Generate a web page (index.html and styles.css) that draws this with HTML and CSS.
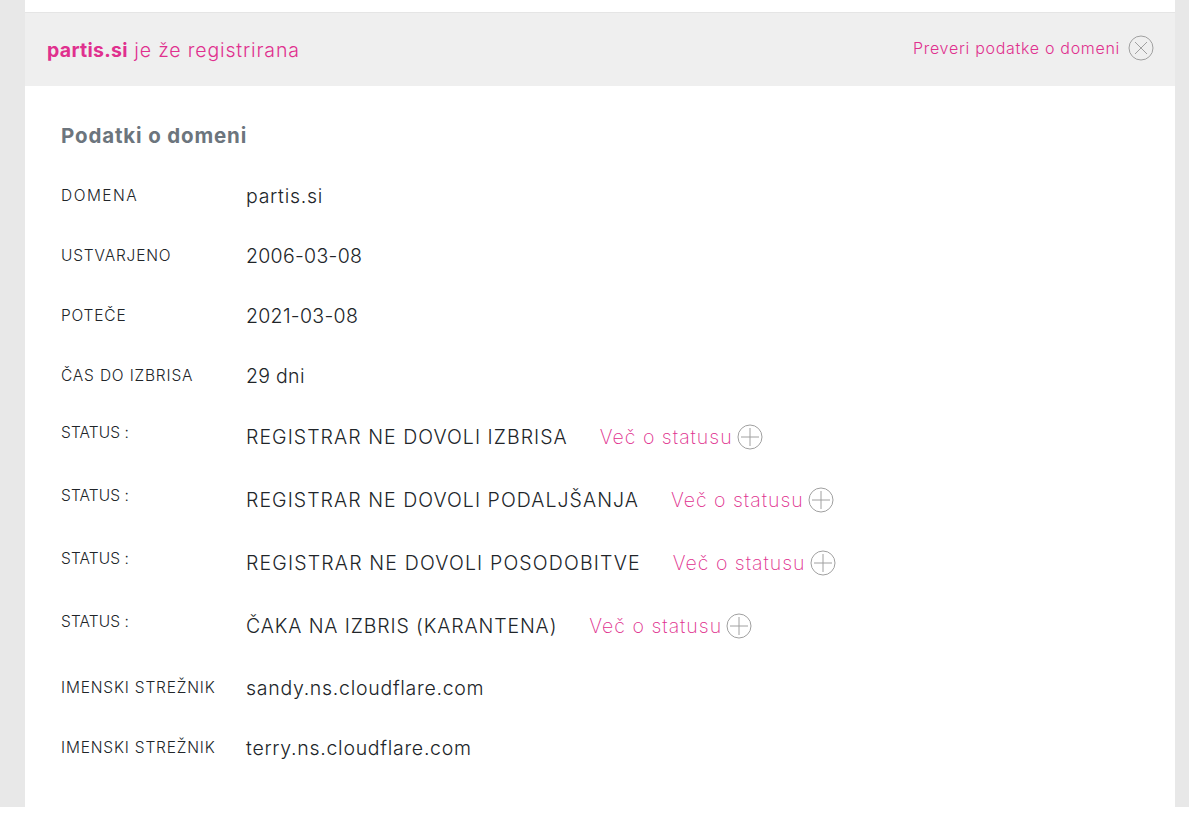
FILE: index.html
```html
<!DOCTYPE html>
<html lang="sl">
<head>
<meta charset="utf-8">
<title>partis.si</title>
<link rel="stylesheet" href="styles.css">
</head>
<body>
<div class="frame">
  <main class="card">
    <header class="banner">
      <h1 class="banner-title"><strong>partis.si</strong> je že registrirana</h1>
      <a class="banner-link">Preveri podatke o domeni
        <svg class="icon" viewBox="0 0 26 26"><circle cx="13" cy="13" r="12" /><path d="M7 7 19 19M19 7 7 19" /></svg>
      </a>
    </header>
    <section class="details">
      <h2 class="details-title">Podatki o domeni</h2>
      <div class="row"><span class="label label-wide">DOMENA</span><span class="value">partis.si</span></div>
      <div class="row"><span class="label">USTVARJENO</span><span class="value value-num">2006-03-08</span></div>
      <div class="row"><span class="label">POTEČE</span><span class="value value-num">2021-03-08</span></div>
      <div class="row"><span class="label">ČAS DO IZBRISA</span><span class="value value-num">29 dni</span></div>
      <div class="row row-status"><span class="label label-status">STATUS :</span><span class="value value-caps">REGISTRAR NE DOVOLI IZBRISA</span><a class="more">Več o statusu<svg class="icon" viewBox="0 0 26 26"><circle cx="13" cy="13" r="12" /><path d="M13 4V22M4 13H22" /></svg></a></div>
      <div class="row row-status"><span class="label label-status">STATUS :</span><span class="value value-caps">REGISTRAR NE DOVOLI PODALJŠANJA</span><a class="more">Več o statusu<svg class="icon" viewBox="0 0 26 26"><circle cx="13" cy="13" r="12" /><path d="M13 4V22M4 13H22" /></svg></a></div>
      <div class="row row-status"><span class="label label-status">STATUS :</span><span class="value value-caps value-caps-wide">REGISTRAR NE DOVOLI POSODOBITVE</span><a class="more">Več o statusu<svg class="icon" viewBox="0 0 26 26"><circle cx="13" cy="13" r="12" /><path d="M13 4V22M4 13H22" /></svg></a></div>
      <div class="row row-status"><span class="label label-status">STATUS :</span><span class="value value-caps value-caps-narrow">ČAKA NA IZBRIS (KARANTENA)</span><a class="more">Več o statusu<svg class="icon" viewBox="0 0 26 26"><circle cx="13" cy="13" r="12" /><path d="M13 4V22M4 13H22" /></svg></a></div>
      <div class="row"><span class="label">IMENSKI STREŽNIK</span><span class="value">sandy.ns.cloudflare.com</span></div>
      <div class="row"><span class="label">IMENSKI STREŽNIK</span><span class="value">terry.ns.cloudflare.com</span></div>
    </section>
  </main>
</div>
</body>
</html>
```
FILE: styles.css
```css
html, body {
  margin: 0;
  padding: 0;
  background: #fff;
  overflow: hidden;
}
body {
  font-family: Inter, "Open Sans", sans-serif;
  color: #212529;
  height: 813px;
}
.frame {
  background: #e8e8e8;
  height: 807px;
  padding: 0 14px 0 25px;
}
.card {
  background: #fff;
  height: 100%;
  padding-top: 12px;
  box-sizing: border-box;
}
.banner {
  height: 74px;
  box-sizing: border-box;
  background: #efefef;
  border-top: 1px solid #e5e5e5;
  display: flex;
  align-items: center;
  justify-content: space-between;
  padding: 0 21px 1px 22px;
  color: #e0308e;
}
.banner-title {
  margin: 0;
  font-size: 19.5px;
  font-weight: 300;
  letter-spacing: 0.85px;
  position: relative;
  top: 1px;
}
.banner-title strong {
  font-weight: 700;
  letter-spacing: 0.3px;
}
.banner-link {
  display: flex;
  align-items: center;
  gap: 8px;
  font-size: 16px;
  font-weight: 300;
  letter-spacing: 0.7px;
  position: relative;
  top: -1px;
}
.icon {
  width: 26px;
  height: 26px;
  flex: none;
  fill: none;
  stroke: #a0a0a0;
  stroke-width: 1;
}
.details {
  padding: 33px 36px 0;
}
.details-title {
  margin: 0 0 13px;
  font-size: 20.5px;
  line-height: 34px;
  font-weight: 700;
  letter-spacing: 0.85px;
  color: #6c757d;
}
.row {
  display: flex;
  align-items: center;
  height: 60px;
}
.row-status {
  height: 63px;
  padding-bottom: 2px;
  box-sizing: border-box;
}
.label {
  width: 185px;
  flex: none;
  font-size: 15.5px;
  font-weight: 300;
  letter-spacing: 0.82px;
  position: relative;
  top: -1px;
}
.label-wide { letter-spacing: 1.5px; }
.label-status {
  letter-spacing: 0.1px;
  top: -4px;
}
.value {
  font-size: 19.5px;
  font-weight: 300;
  letter-spacing: 0.72px;
}
.value-num { letter-spacing: 0.3px; }
.value-caps { letter-spacing: 1.05px; }
.value-caps-wide { letter-spacing: 1.17px; }
.value-caps-narrow { letter-spacing: 0.88px; }
.more {
  display: flex;
  align-items: center;
  gap: 4px;
  margin-left: 32px;
  font-size: 19.5px;
  font-weight: 250;
  letter-spacing: 1px;
  color: #e0308e;
}
```
